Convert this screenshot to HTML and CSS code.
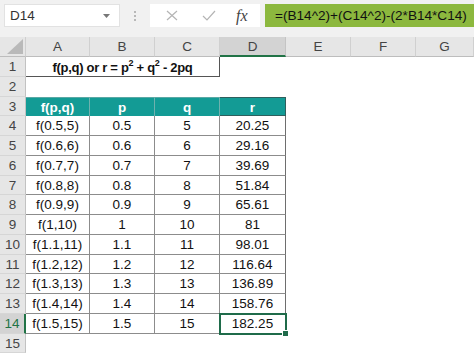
FILE: index.html
```html
<!DOCTYPE html>
<html lang="en">
<head>
    <meta charset="UTF-8">
    <meta name="viewport" content="width=device-width, initial-scale=1.0">
    <title>f(p,q) worksheet</title>
    <link rel="stylesheet" href="styles.css">
</head>
<body>
    <div class="topbar">
        <div class="namebox">
            <span>D14</span>
            <svg class="caret" width="7" height="4" viewBox="0 0 7 4"><path d="M0 0h7L3.5 4z" fill="#777"/></svg>
        </div>
        <div class="grip"><i></i><i></i><i></i></div>
        <div class="fxbox">
            <svg width="12" height="11" viewBox="0 0 12 11"><path d="M1 1l10 9M11 1L1 10" stroke="#b4b4b4" stroke-width="1.2" fill="none"/></svg>
            <svg width="14" height="11" viewBox="0 0 14 11"><path d="M1 6l4 4 8-9" stroke="#b4b4b4" stroke-width="1.2" fill="none"/></svg>
            <span class="fx">fx</span>
        </div>
        <div class="formula">=(B14^2)+(C14^2)-(2*B14*C14)</div>
    </div>

    <div class="sheet">
        <div class="corner"><svg width="16" height="15" viewBox="0 0 16 15"><path d="M16 0V15H0z" fill="#b9b9b9"/></svg></div>
        <div class="ch">A</div>
        <div class="ch">B</div>
        <div class="ch">C</div>
        <div class="ch active">D</div>
        <div class="ch">E</div>
        <div class="ch">F</div>
        <div class="ch">G</div>

        <div class="rh">1</div>
        <div class="title">f(p,q) or r = p<sup>2</sup> + q<sup>2</sup> - 2pq</div>

        <div class="rh">2</div>

        <div class="rh">3</div>
        <div class="th">f(p,q)</div>
        <div class="th">p</div>
        <div class="th">q</div>
        <div class="th last">r</div>

        <div class="rh">4</div>
        <div class="td">f(0.5,5)</div><div class="td">0.5</div><div class="td">5</div><div class="td last">20.25</div>
        <div class="rh">5</div>
        <div class="td">f(0.6,6)</div><div class="td">0.6</div><div class="td">6</div><div class="td last">29.16</div>
        <div class="rh">6</div>
        <div class="td">f(0.7,7)</div><div class="td">0.7</div><div class="td">7</div><div class="td last">39.69</div>
        <div class="rh">7</div>
        <div class="td">f(0.8,8)</div><div class="td">0.8</div><div class="td">8</div><div class="td last">51.84</div>
        <div class="rh">8</div>
        <div class="td">f(0.9,9)</div><div class="td">0.9</div><div class="td">9</div><div class="td last">65.61</div>
        <div class="rh">9</div>
        <div class="td">f(1,10)</div><div class="td">1</div><div class="td">10</div><div class="td last">81</div>
        <div class="rh">10</div>
        <div class="td">f(1.1,11)</div><div class="td">1.1</div><div class="td">11</div><div class="td last">98.01</div>
        <div class="rh">11</div>
        <div class="td">f(1.2,12)</div><div class="td">1.2</div><div class="td">12</div><div class="td last">116.64</div>
        <div class="rh">12</div>
        <div class="td">f(1.3,13)</div><div class="td">1.3</div><div class="td">13</div><div class="td last">136.89</div>
        <div class="rh">13</div>
        <div class="td">f(1.4,14)</div><div class="td">1.4</div><div class="td">14</div><div class="td last">158.76</div>
        <div class="rh active">14</div>
        <div class="td">f(1.5,15)</div><div class="td">1.5</div><div class="td">15</div><div class="td last selected">182.25</div>

        <div class="rh">15</div>
    </div>
</body>
</html>
```

FILE: styles.css
```css
body {
    margin: 0;
    background-color: #fff;
    font-family: 'Liberation Sans', Arial, sans-serif;
    color: #222;
    overflow: hidden;
}
.topbar {
    display: flex;
    align-items: stretch;
    height: 37px;
    padding: 4px 0 0 4px;
    box-sizing: border-box;
    background-color: #f1f1f1;
}
.topbar > div {
    height: 23px;
}
.namebox {
    width: 116px;
    background: white;
    border: 1px solid #e2e2e2;
    box-sizing: border-box;
    display: flex;
    align-items: center;
    justify-content: space-between;
    padding: 0 9px 0 5px;
    font-size: 13.5px;
    color: #333;
}
.caret {
    margin-top: 1px;
}
.grip {
    width: 30px;
    display: flex;
    flex-direction: column;
    align-items: center;
    justify-content: center;
    gap: 2px;
}
.grip i {
    width: 2px;
    height: 2px;
    background: #b8b8b8;
}
.fxbox {
    width: 110px;
    background: white;
    display: flex;
    align-items: center;
    padding-left: 16px;
    gap: 24px;
    box-sizing: border-box;
}
.fx {
    font-family: 'Liberation Serif', 'Times New Roman', serif;
    font-style: italic;
    font-size: 16px;
    color: #444;
    margin-left: -4px;
}
.formula {
    flex: 1;
    margin-left: 5px;
    background-color: #8cb83e;
    color: #111;
    font-size: 13.6px;
    display: flex;
    align-items: center;
    padding-left: 10px;
    white-space: nowrap;
}
.sheet {
    display: grid;
    grid-template-columns: 26px 64px 65px 65px 66px 65px 65px 1fr;
    grid-template-rows: 20px;
    grid-auto-rows: 19.75px;
    font-size: 13.5px;
}
.corner {
    background: #e6e6e6;
    border-right: 1px solid #cfcfcf;
    border-bottom: 1px solid #bdbdbd;
    display: flex;
    align-items: flex-end;
    justify-content: flex-end;
    padding: 0 2px 2px 0;
    box-sizing: border-box;
}
.ch {
    background: #e6e6e6;
    border-right: 1px solid #d0d0d0;
    border-bottom: 1px solid #bdbdbd;
    color: #444;
    text-align: center;
    line-height: 20px;
    box-sizing: border-box;
}
.ch.active {
    background: #d3d3d3;
    border-bottom: 2px solid #217346;
    border-right-color: #c4c4c4;
}
.rh {
    grid-column: 1;
    background: #e6e6e6;
    border-right: 1px solid #c2c2c2;
    border-bottom: 1px solid #d6d6d6;
    color: #444;
    text-align: center;
    line-height: 19px;
    box-sizing: border-box;
}
.rh.active {
    background: #d3d3d3;
    color: #217346;
    border-right: 2px solid #217346;
}
.title {
    grid-column: span 3;
    border-right: 1px solid #555;
    border-bottom: 1px solid #555;
    font-weight: bold;
    font-size: 13px;
    letter-spacing: -0.3px;
    text-align: center;
    line-height: 21px;
    color: #111;
}
.title sup {
    font-size: 9px;
    line-height: 0;
    vertical-align: 6px;
}
.th {
    background-color: #139b95;
    color: white;
    font-weight: bold;
    text-align: center;
    line-height: 20px;
    border-top: 1px solid #5aa8a4;
    border-right: 1px solid #6fb1ae;
    box-sizing: border-box;
}
.th.last {
    border: 1px solid #2f5f5d;
    border-left: none;
}
.td {
    text-align: center;
    line-height: 20px;
    border-right: 1px solid #8c8c8c;
    border-bottom: 1px solid #8c8c8c;
    box-sizing: border-box;
    color: #111;
    position: relative;
}
.td.last {
    border-right-color: #6e6e6e;
}
.selected::after {
    content: "";
    position: absolute;
    left: -1px;
    top: -1px;
    right: -2px;
    bottom: -2px;
    border: 2px solid #1f6b4a;
}
.selected::before {
    content: "";
    position: absolute;
    right: -4px;
    bottom: -4px;
    width: 5px;
    height: 5px;
    background: #1f6b4a;
    border: 1px solid white;
    z-index: 1;
}
```
